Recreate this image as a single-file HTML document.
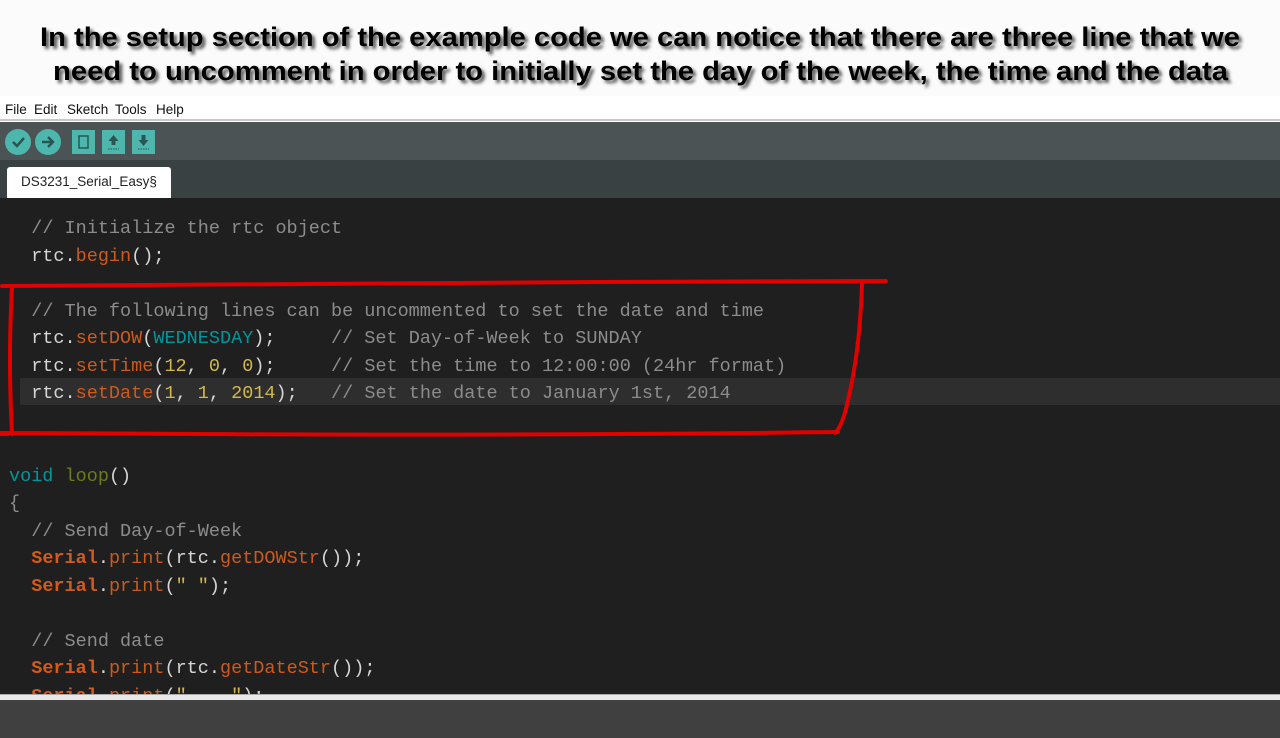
<!DOCTYPE html>
<html><head><meta charset="utf-8"><style>
*{margin:0;padding:0;box-sizing:border-box}
body{width:1280px;height:738px;overflow:hidden;background:#fff;position:relative;font-family:"Liberation Sans",sans-serif}
#cap{position:absolute;left:0;top:0;width:1280px;height:96px;background:#fbfbfb}
#menu{position:absolute;left:0;top:99px;width:1280px;height:22px;background:#fff;font-size:13.5px;color:#111;border-bottom:2px solid #c8c8c8}
#menu span{position:absolute;top:3px}
#tool{position:absolute;left:0;top:122px;width:1280px;height:38px;background:#4b5354}
.c{position:absolute;top:7px;width:26px;height:26px;border-radius:50%;background:#4db7ad}
.s{position:absolute;top:8px;width:23px;height:24px;background:#4db7ad}
#tabs{position:absolute;left:0;top:160px;width:1280px;height:38px;background:#3a4142}
#tab{position:absolute;left:7px;top:7px;width:164px;height:31px;background:#fff;border-radius:3px 3px 0 0;font-size:13.5px;color:#222;padding:7px 0 0 14px}
#code{position:absolute;left:0;top:198px;width:1280px;height:496px;background:#1f1f1f;overflow:hidden}
#hl{position:absolute;left:20px;top:180px;width:1260px;height:27px;background:#2e2e2e}
pre{position:absolute;left:9px;top:17px;font-family:"Liberation Mono",monospace;font-size:18.5px;line-height:27.5px;color:#d6d6d6}
.g{color:#8c8c8c}.o{color:#cc5a1f}.t{color:#00979c}.y{color:#d1b84f}.b{color:#d35a1a;font-weight:bold}.l{color:#6e7a1e}
#strip{position:absolute;left:0;top:694px;width:1280px;height:6px;background:#e8e8e8;border-top:1px solid #aaa}
#bot{position:absolute;left:0;top:700px;width:1280px;height:38px;background:#404040}
</style></head><body>
<div id="cap"><svg width="1280" height="96">
<defs><filter id="sh"><feGaussianBlur stdDeviation="1.6"/></filter></defs>
<g font-family="Liberation Sans" font-weight="bold" font-size="27">
<text x="43" y="49" textLength="1200" lengthAdjust="spacingAndGlyphs" fill="#555" filter="url(#sh)">In the setup section of the example code we can notice that there are three line that we</text>
<text x="56" y="83" textLength="1175" lengthAdjust="spacingAndGlyphs" fill="#555" filter="url(#sh)">need to uncomment in order to initially set the day of the week, the time and the data</text>
<text x="40" y="46" textLength="1200" lengthAdjust="spacingAndGlyphs" fill="#000">In the setup section of the example code we can notice that there are three line that we</text>
<text x="53" y="80" textLength="1175" lengthAdjust="spacingAndGlyphs" fill="#000">need to uncomment in order to initially set the day of the week, the time and the data</text>
</g></svg></div>
<div id="menu"><span style="left:5px">File</span><span style="left:34px">Edit</span><span style="left:67px">Sketch</span><span style="left:115px">Tools</span><span style="left:156px">Help</span></div>
<div id="tool">
<div class="c" style="left:5px"><svg width="26" height="26"><path d="M8 13l4 4 7-8" stroke="#2b5552" stroke-width="2.5" fill="none"/></svg></div>
<div class="c" style="left:35px"><svg width="26" height="26"><path d="M7 13h10M13 8l5 5-5 5" stroke="#2b5552" stroke-width="2.5" fill="none"/></svg></div>
<div class="s" style="left:72px"><svg width="23" height="24"><rect x="7" y="6" width="9" height="12" fill="none" stroke="#2b5552" stroke-width="1.5"/></svg></div>
<div class="s" style="left:102px"><svg width="23" height="24"><path d="M11.5 5l-5 6h3v4h4v-4h3z" fill="#2b5552"/><path d="M6 19h11" stroke="#2b5552" stroke-dasharray="1.5 1"/></svg></div>
<div class="s" style="left:132px"><svg width="23" height="24"><path d="M11.5 16l-5-6h3V5h4v5h3z" fill="#2b5552"/><path d="M6 19h11" stroke="#2b5552" stroke-dasharray="1.5 1"/></svg></div>
</div>
<div id="tabs"><div id="tab">DS3231_Serial_Easy§</div></div>
<div id="code"><div id="hl"></div>
<pre>  <span class="g">// Initialize the rtc object</span>
  rtc.<span class="o">begin</span>();

  <span class="g">// The following lines can be uncommented to set the date and time</span>
  rtc.<span class="o">setDOW</span>(<span class="t">WEDNESDAY</span>);     <span class="g">// Set Day-of-Week to SUNDAY</span>
  rtc.<span class="o">setTime</span>(<span class="y">12</span>, <span class="y">0</span>, <span class="y">0</span>);     <span class="g">// Set the time to 12:00:00 (24hr format)</span>
  rtc.<span class="o">setDate</span>(<span class="y">1</span>, <span class="y">1</span>, <span class="y">2014</span>);   <span class="g">// Set the date to January 1st, 2014</span>


<span class="t">void</span> <span class="l">loop</span>()
<span class="g">{</span>
  <span class="g">// Send Day-of-Week</span>
  <span class="b">Serial</span>.<span class="o">print</span>(rtc.<span class="o">getDOWStr</span>());
  <span class="b">Serial</span>.<span class="o">print</span>(<span class="y">" "</span>);

  <span class="g">// Send date</span>
  <span class="b">Serial</span>.<span class="o">print</span>(rtc.<span class="o">getDateStr</span>());
  <span class="b">Serial</span>.<span class="o">print</span>(<span class="y">" -- "</span>);</pre>
</div>
<svg style="position:absolute;left:0;top:0" width="1280" height="738"><path d="M2 286 Q300 283 600 282 T885 281 M862 283 Q860 350 848 400 Q843 425 835 433 M838 432 Q500 436 200 434 T8 434 M12 287 Q8 360 12 434" stroke="#e00000" stroke-width="4" fill="none" stroke-linecap="round"/></svg>
<div id="strip"></div><div id="bot"></div>
</body></html>
